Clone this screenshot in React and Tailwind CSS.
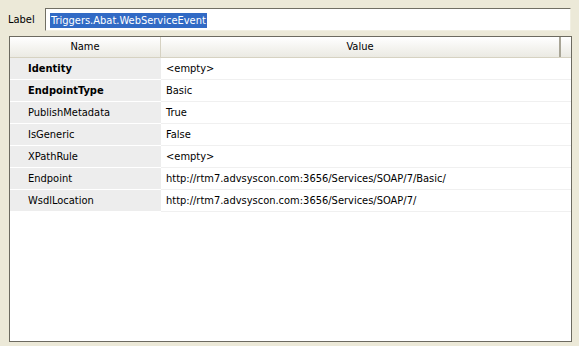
const rows = [
  { name: 'Identity', value: '<empty>', bold: true },
  { name: 'EndpointType', value: 'Basic', bold: true },
  { name: 'PublishMetadata', value: 'True' },
  { name: 'IsGeneric', value: 'False' },
  { name: 'XPathRule', value: '<empty>' },
  { name: 'Endpoint', value: 'http://rtm7.advsyscon.com:3656/Services/SOAP/7/Basic/' },
  { name: 'WsdlLocation', value: 'http://rtm7.advsyscon.com:3656/Services/SOAP/7/' },
];

export default function App() {
  return (
    <div
      className="w-[579px] h-[346px] bg-[#ece9d8] text-[11px] text-black overflow-hidden"
      style={{ fontFamily: 'Tahoma, "DejaVu Sans Condensed", "DejaVu Sans", sans-serif' }}
    >
      <div className="flex items-center h-[23px] mt-[8px] pl-[8px] pr-[8px]">
        <span className="w-[37px] pt-[2px]">Label</span>
        <div className="flex-1 h-[23px] bg-white border border-t-[#716f64] border-l-[#716f64] border-r-[#f1efe2] border-b-[#f1efe2] flex items-center pl-[4px] pt-px">
          <span className="bg-[#316ac5] text-white leading-[15px] px-px">Triggers.Abat.WebServiceEvent</span>
        </div>
      </div>

      <div className="mt-[5px] ml-[9px] w-[563px] h-[306px] bg-white border border-[#6c6a60] flex flex-col">
        <div className="flex h-[21px] border-b border-[#d6d2c2] bg-gradient-to-b from-[#ffffff] to-[#ebeae3]">
          <div className="w-[151px] flex items-center justify-center border-r border-[#d6d2c2]">Name</div>
          <div className="w-[400px] flex items-center justify-center border-r-2 border-[#a8a596]">Value</div>
          <div className="flex-1" />
        </div>
        {rows.map((r) => (
          <div key={r.name} className="flex h-[22px]">
            <div className="w-[151px] bg-[#ededed] border-b border-white flex items-center pl-[18px] pt-px">
              <span className={r.bold ? 'font-bold' : ''}>{r.name}</span>
            </div>
            <div className="flex-1 border-b border-[#f0f0f0] flex items-center pl-[5px] pt-px">{r.value}</div>
          </div>
        ))}
      </div>
    </div>
  );
}
